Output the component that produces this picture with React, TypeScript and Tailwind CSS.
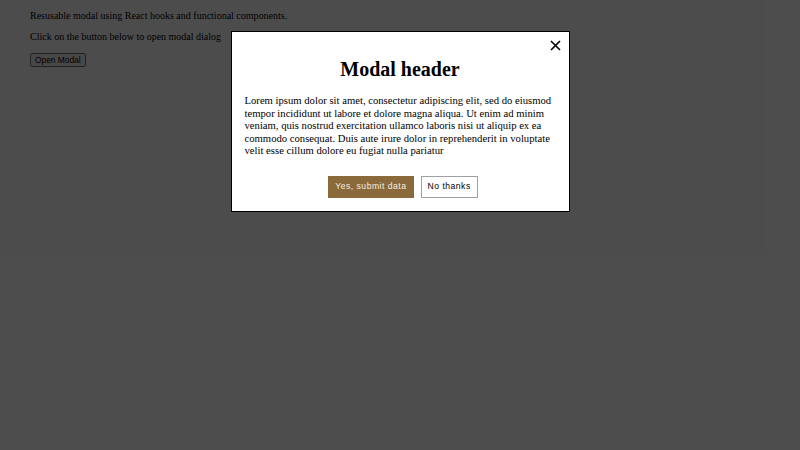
import { useState } from "react";

function CloseIcon() {
  return (
    <svg width="11" height="11" viewBox="0 0 11 11" fill="none">
      <path d="M1 1L10 10M10 1L1 10" stroke="#000" strokeWidth="1.6" />
    </svg>
  );
}

export default function App() {
  const [open, setOpen] = useState(true);

  return (
    <div
      className="relative min-h-screen w-full bg-white text-black"
      style={{ fontFamily: '"Liberation Serif", "Times New Roman", serif' }}
    >
      <div className="px-[30px] pt-[10px] text-[10px] leading-[12.3px]">
        <p>Resusable modal using React hooks and functional components.</p>
        <p className="mt-[9px]">Click on the button below to open modal dialog</p>
        <button
          onClick={() => setOpen(true)}
          className="mt-[9px] rounded-[2px] border border-[#767676] bg-[#efefef] px-[4px] py-[1px] text-[8.4px] leading-[10px]"
          style={{ fontFamily: '"Liberation Sans", Arial, sans-serif' }}
        >
          Open Modal
        </button>
      </div>

      {open && (
        <div className="absolute inset-0 bg-black/70">
          <div className="mx-auto mt-[31px] w-[339px] border border-black bg-white pb-[13px] pl-[13px] pr-[7px] pt-[7px]">
            <div className="flex justify-end">
              <button onClick={() => setOpen(false)} className="p-[1px]">
                <CloseIcon />
              </button>
            </div>
            <div className="pr-[6px]">
              <h1 className="mt-[5px] text-center text-[20px] font-bold leading-[25px]">
                Modal header
              </h1>
              <p className="mt-[12px] text-[10.67px] leading-[12.5px]">
                Lorem ipsum dolor sit amet, consectetur adipiscing elit, sed do eiusmod
                tempor incididunt ut labore et dolore magna aliqua. Ut enim ad minim
                veniam, quis nostrud exercitation ullamco laboris nisi ut aliquip ex ea
                commodo consequat. Duis aute irure dolor in reprehenderit in voluptate
                velit esse cillum dolore eu fugiat nulla pariatur
              </p>
              <div
                className="mt-[19px] flex justify-center gap-[7px] pl-[6px] text-[8.6px] tracking-[0.5px]"
                style={{ fontFamily: '"Liberation Sans", Arial, sans-serif' }}
              >
                <button
                  onClick={() => setOpen(false)}
                  className="h-[22px] border border-[#8a6a3a] bg-[#8a6a3a] px-[6px] text-[#f4ede2]"
                >
                  Yes, submit data
                </button>
                <button
                  onClick={() => setOpen(false)}
                  className="h-[22px] border border-[#a0a0a0] bg-white px-[6px] text-black"
                >
                  No thanks
                </button>
              </div>
            </div>
          </div>
        </div>
      )}
    </div>
  );
}
